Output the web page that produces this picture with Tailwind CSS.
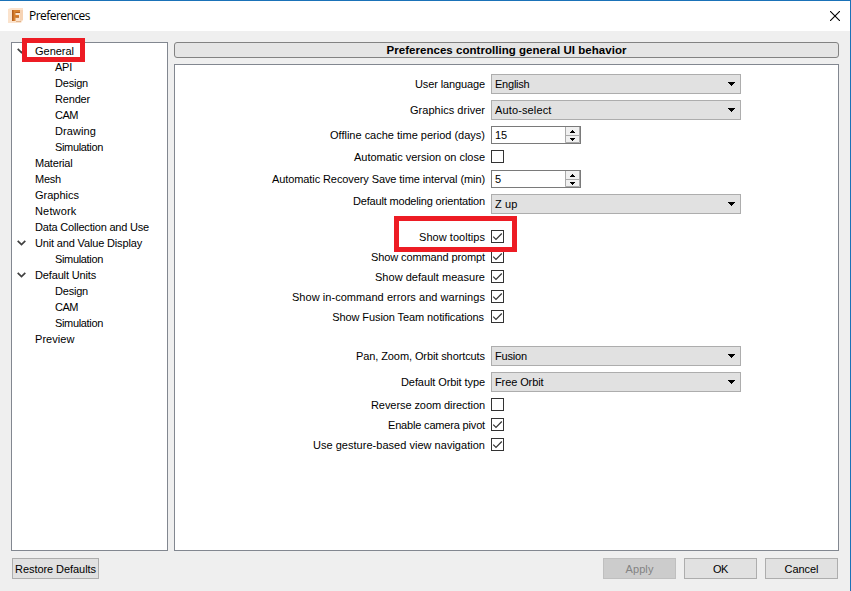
<!DOCTYPE html>
<html lang="en">
<head>
<meta charset="utf-8">
<title>Preferences</title>
<script src="https://cdn.jsdelivr.net/npm/@tailwindcss/browser@4"></script>
</head>
<body class="w-[851px] h-[591px] overflow-hidden bg-[#efefef] text-black text-[11px] leading-4 font-['Liberation_Sans',Arial,sans-serif]">
<svg class="hidden">
  <symbol id="chev" viewBox="0 0 9 6"><path d="M.7 .8 4.5 4.5 8.3 .8" fill="none" stroke="#404040" stroke-width="1.7"/></symbol>
  <symbol id="down" viewBox="0 0 7 4"><path d="M0 0h7v1H0zM1 1h5v1H1zM2 2h3v1H2zM3 3h1v1H3z"/></symbol>
  <symbol id="check" viewBox="0 0 11 11"><path d="M1.2 5.6 4 8.4 9.8 2.5" fill="none" stroke="#333" stroke-width="1.2"/></symbol>
  <symbol id="spin" viewBox="0 0 15 16"><path d="M.5 0V15.5H14.500V0M0 8.500H15" fill="none" stroke="#aaa"/><path d="M7 3h1v1H7zM6 4h3v1H6zM5 5h5v1H5zM5 11h5v1H5zM6 12h3v1H6zM7 13h1v1H7z"/></symbol>
</svg>
<div class="relative flex flex-col w-[851px] h-[591px] border-t border-r border-[#1a72b8]">
  <header class="flex items-center h-[30px] bg-white pl-2 pr-[10px]">
    <svg class="w-4 h-4 shrink-0" viewBox="0 0 16 16"><path d="M0 1 3 0h12v12l-2 3H0z" fill="#fbe3cd"/><path d="M12 2h3v10l-3 1z" fill="#f6d3b4"/><path d="M4 2h8v3H7.500v2H11v2.500H7.500V13H4z" fill="#d9822f"/><path d="M4 2h1.500v11H4z" fill="#b5601f"/><path d="M7.500 4.200H12V5H7.500zM7.500 8.700H11v.8H7.500z" fill="#a85518"/><path d="M8 13h5v1H8z" fill="#e0b48e"/></svg>
    <h1 class="ml-[5px] text-[12px] font-['Open_Sans','Noto_Sans',sans-serif] tracking-[-0.55px]">Preferences</h1>
    <svg class="ml-auto w-[10px] h-[10px]" viewBox="0 0 10 10"><path d="M0 0 10 10M10 0 0 10" stroke="#000" stroke-width="1.1"/></svg>
  </header>
  <main class="flex gap-[6px] pt-[11px] pl-[11px] pr-[11px] h-[520px]">
    <nav class="w-[157px] h-[509px] bg-white border border-[#828790] shrink-0">
      <div class="flex items-center h-4 pl-[5px]"><svg class="w-[9px] h-[6px] mr-[9px]"><use href="#chev"/></svg><span class="t" data-w="39">General</span></div>
      <div class="h-4 pl-[43px]"><span class="t" data-w="17">API</span></div>
      <div class="h-4 pl-[43px]"><span class="t" data-w="33">Design</span></div>
      <div class="h-4 pl-[43px]"><span class="t" data-w="35">Render</span></div>
      <div class="h-4 pl-[43px]"><span class="t" data-w="23">CAM</span></div>
      <div class="h-4 pl-[43px]"><span class="t" data-w="41">Drawing</span></div>
      <div class="h-4 pl-[43px]"><span class="t" data-w="48">Simulation</span></div>
      <div class="h-4 pl-[23px]"><span class="t" data-w="37.5">Material</span></div>
      <div class="h-4 pl-[23px]"><span class="t" data-w="26">Mesh</span></div>
      <div class="h-4 pl-[23px]"><span class="t" data-w="44">Graphics</span></div>
      <div class="h-4 pl-[23px]"><span class="t" data-w="41.5">Network</span></div>
      <div class="h-4 pl-[23px] whitespace-nowrap"><span class="t" data-w="114">Data Collection and Use</span></div>
      <div class="flex items-center h-4 pl-[5px]"><svg class="w-[9px] h-[6px] mr-[9px]"><use href="#chev"/></svg><span class="t" data-w="107">Unit and Value Display</span></div>
      <div class="h-4 pl-[43px]"><span class="t" data-w="48">Simulation</span></div>
      <div class="flex items-center h-4 pl-[5px]"><svg class="w-[9px] h-[6px] mr-[9px]"><use href="#chev"/></svg><span class="t" data-w="61">Default Units</span></div>
      <div class="h-4 pl-[43px]"><span class="t" data-w="33">Design</span></div>
      <div class="h-4 pl-[43px]"><span class="t" data-w="23">CAM</span></div>
      <div class="h-4 pl-[43px]"><span class="t" data-w="48">Simulation</span></div>
      <div class="h-4 pl-[23px]"><span class="t" data-w="39.5">Preview</span></div>
    </nav>
    <section class="flex flex-col gap-[6px] w-[665px] h-[509px] shrink-0">
      <h2 class="h-4 flex items-center justify-center rounded-[3px] border border-[#828282] bg-[#e5e5e5] font-bold text-[11.5px]"><span class="t" data-w="240" data-font="bold 11.5px">Preferences controlling general UI behavior</span></h2>
      <div class="flex-1 bg-white border border-[#828790] pt-[9px]">
        <div class="flex items-center h-5"><label class="w-[310px] text-right mr-[6px]"><span class="t" data-w="70">User language</span></label><div class="flex items-center w-[250px] h-5 bg-[#e1e1e1] border border-[#adadad] pl-[3px] pr-[5px]"><span class="t" data-w="34.5">English</span><svg class="ml-auto w-[7px] h-1"><use href="#down"/></svg></div></div>
        <div class="flex items-center h-5 mt-[6px]"><label class="w-[310px] text-right mr-[6px]"><span class="t" data-w="75">Graphics driver</span></label><div class="flex items-center w-[250px] h-5 bg-[#e1e1e1] border border-[#adadad] pl-[3px] pr-[5px]"><span class="t" data-w="56.5">Auto-select</span><svg class="ml-auto w-[7px] h-1"><use href="#down"/></svg></div></div>
        <div class="flex items-center h-[18px] mt-[6px]"><label class="w-[310px] text-right mr-[6px]"><span class="t" data-w="155">Offline cache time period (days)</span></label><div class="flex items-center w-[90px] h-[18px] bg-white border border-[#7a7a7a] pl-[3px]"><span class="t" data-w="12">15</span><svg class="ml-auto w-[15px] h-4 bg-[#f0f0f0]"><use href="#spin"/></svg></div></div>
        <div class="flex items-center h-[13px] mt-[6px]"><label class="w-[310px] text-right mr-[6px]"><span class="t" data-w="131">Automatic version on close</span></label><div class="w-[13px] h-[13px] border border-[#333]"></div></div>
        <div class="flex items-center h-[18px] mt-[7px]"><label class="w-[310px] text-right mr-[6px]"><span class="t" data-w="213">Automatic Recovery Save time interval (min)</span></label><div class="flex items-center w-[90px] h-[18px] bg-white border border-[#7a7a7a] pl-[3px]"><span class="t" data-w="6">5</span><svg class="ml-auto w-[15px] h-4 bg-[#f0f0f0]"><use href="#spin"/></svg></div></div>
        <div class="flex items-center h-5 mt-[6px]"><label class="w-[310px] text-right mr-[6px] pb-[6px]"><span class="t" data-w="132">Default modeling orientation</span></label><div class="flex items-center w-[250px] h-5 bg-[#e1e1e1] border border-[#adadad] pl-[3px] pr-[5px]"><span class="t" data-w="22.5">Z up</span><svg class="ml-auto w-[7px] h-1"><use href="#down"/></svg></div></div>
        <div class="flex items-center h-[13px] mt-4"><label class="w-[310px] text-right mr-[6px]"><span class="t" data-w="66">Show tooltips</span></label><div class="w-[13px] h-[13px] border border-[#333]"><svg class="w-[11px] h-[11px]"><use href="#check"/></svg></div></div>
        <div class="flex items-center h-[13px] mt-[7px]"><label class="w-[310px] text-right mr-[6px]"><span class="t" data-w="114">Show command prompt</span></label><div class="w-[13px] h-[13px] border border-[#333]"><svg class="w-[11px] h-[11px]"><use href="#check"/></svg></div></div>
        <div class="flex items-center h-[13px] mt-[7px]"><label class="w-[310px] text-right mr-[6px]"><span class="t" data-w="110">Show default measure</span></label><div class="w-[13px] h-[13px] border border-[#333]"><svg class="w-[11px] h-[11px]"><use href="#check"/></svg></div></div>
        <div class="flex items-center h-[13px] mt-[7px]"><label class="w-[310px] text-right mr-[6px]"><span class="t" data-w="193">Show in-command errors and warnings</span></label><div class="w-[13px] h-[13px] border border-[#333]"><svg class="w-[11px] h-[11px]"><use href="#check"/></svg></div></div>
        <div class="flex items-center h-[13px] mt-[7px]"><label class="w-[310px] text-right mr-[6px] pr-px"><span class="t" data-w="152">Show Fusion Team notifications</span></label><div class="w-[13px] h-[13px] border border-[#333]"><svg class="w-[11px] h-[11px]"><use href="#check"/></svg></div></div>
        <div class="flex items-center h-5 mt-[23px]"><label class="w-[310px] text-right mr-[6px]"><span class="t" data-w="129">Pan, Zoom, Orbit shortcuts</span></label><div class="flex items-center w-[250px] h-5 bg-[#e1e1e1] border border-[#adadad] pl-[3px] pr-[5px]"><span class="t" data-w="32">Fusion</span><svg class="ml-auto w-[7px] h-1"><use href="#down"/></svg></div></div>
        <div class="flex items-center h-5 mt-[6px]"><label class="w-[310px] text-right mr-[6px]"><span class="t" data-w="84">Default Orbit type</span></label><div class="flex items-center w-[250px] h-5 bg-[#e1e1e1] border border-[#adadad] pl-[3px] pr-[5px]"><span class="t" data-w="48.5">Free Orbit</span><svg class="ml-auto w-[7px] h-1"><use href="#down"/></svg></div></div>
        <div class="flex items-center h-[13px] mt-[6px]"><label class="w-[310px] text-right mr-[6px]"><span class="t" data-w="114">Reverse zoom direction</span></label><div class="w-[13px] h-[13px] border border-[#333]"></div></div>
        <div class="flex items-center h-[13px] mt-[7px]"><label class="w-[310px] text-right mr-[6px]"><span class="t" data-w="97">Enable camera pivot</span></label><div class="w-[13px] h-[13px] border border-[#333]"><svg class="w-[11px] h-[11px]"><use href="#check"/></svg></div></div>
        <div class="flex items-center h-[13px] mt-[7px]"><label class="w-[310px] text-right mr-[6px]"><span class="t" data-w="172">Use gesture-based view navigation</span></label><div class="w-[13px] h-[13px] border border-[#333]"><svg class="w-[11px] h-[11px]"><use href="#check"/></svg></div></div>
      </div>
    </section>
  </main>
  <footer class="flex gap-2 pt-[7px] pl-3 pr-3">
    <button class="w-[87px] h-[21px] mr-auto bg-[#e1e1e1] border border-[#adadad]"><span class="t" data-w="81">Restore Defaults</span></button>
    <button class="w-[73px] h-[21px] bg-[#ccc] border border-[#bfbfbf] text-[#838383]"><span class="t" data-w="28">Apply</span></button>
    <button class="w-[73px] h-[21px] bg-[#e1e1e1] border border-[#adadad]"><span class="t" data-w="15">OK</span></button>
    <button class="w-[73px] h-[21px] bg-[#e1e1e1] border border-[#adadad]"><span class="t" data-w="34">Cancel</span></button>
  </footer>
  <div class="absolute left-[22px] top-[37px] w-[63px] h-6 border-5 border-[#ed1c24]"></div>
  <div class="absolute left-[394px] top-[215px] w-[123px] h-9 border-5 border-[#ed1c24]"></div>
</div>
<script>
const ctx = document.createElement('canvas').getContext('2d');
for (const s of document.querySelectorAll('.t')) {
  ctx.font = (s.dataset.font || '11px') + ' "Liberation Sans", Arial, sans-serif';
  const w = ctx.measureText(s.textContent).width, n = s.textContent.length;
  s.style.whiteSpace = 'nowrap';
  s.style.letterSpacing = ((+s.dataset.w - w) / n).toFixed(3) + 'px';
}
</script>
</body>
</html>
